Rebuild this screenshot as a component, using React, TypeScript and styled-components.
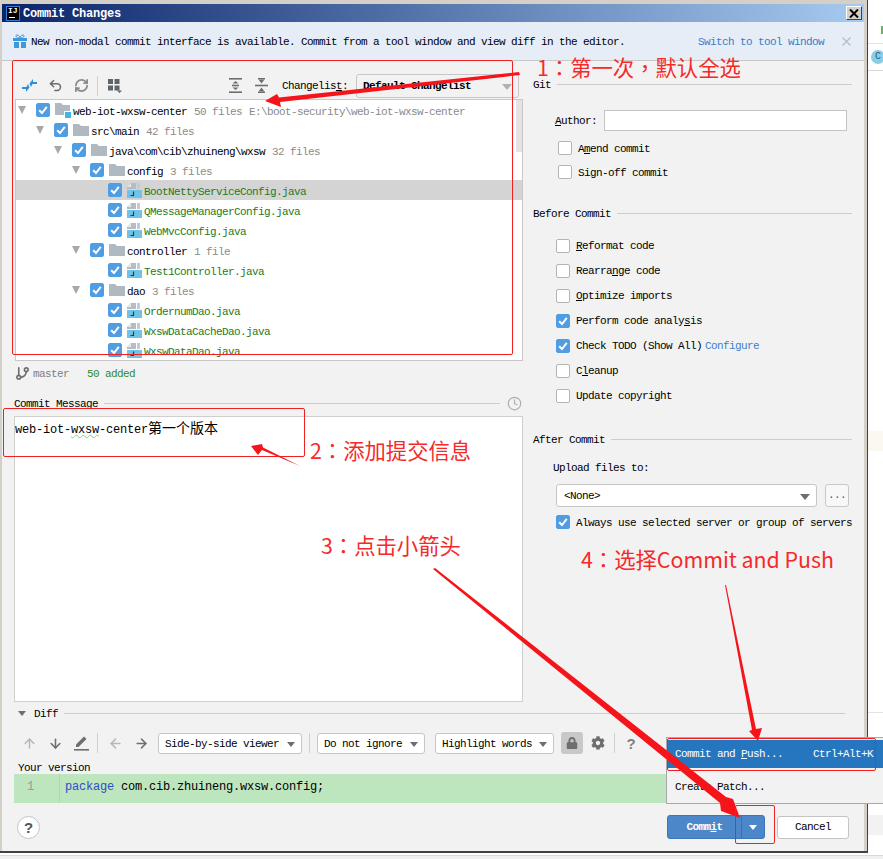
import React from "react";
import styled, { createGlobalStyle } from "styled-components";
import { ArrowUp, ArrowDown, ArrowLeft, ArrowRight, Clock, GitBranch, Undo2, RefreshCw } from "lucide-react";
import { FaCog, FaLock } from "react-icons/fa";

const Global = createGlobalStyle`
  html, body { margin: 0; padding: 0; background: #fff; }
  * { box-sizing: border-box; }
  u { text-underline-offset: 1px; }
`;

const Root = styled.div`
  position: relative; width: 883px; height: 859px; overflow: hidden; background: #fff;
  font-family: "Liberation Mono", "Noto Sans CJK SC", monospace;
  font-size: 11px; letter-spacing: -0.6px; color: #000; line-height: 13px;
`;
const BackLine = styled.div<{ $y: number; $c: string; $h?: number }>`
  position: absolute; left: 868px; right: 0; top: ${p => p.$y}px; height: ${p => p.$h ?? 1}px; background: ${p => p.$c};
`;
const BackBadge = styled.div`
  position: absolute; left: 871px; top: 50px; width: 14px; height: 14px; border-radius: 50%;
  background: #8acde6; color: #2f5f70; font-size: 10px; line-height: 14px; text-align: center; letter-spacing: 0;
`;
const BackTick = styled.div`
  position: absolute; left: 881px; top: 26px; width: 2px; height: 8px; background: #62b56b;
`;
const BottomStrip = styled.div`
  position: absolute; left: 0; right: 0; top: 853px; height: 6px; background: #f0f0f0; border-top: 1px solid #d8d8d8; margin-top: 2px;
`;
const Dialog = styled.div`
  position: relative; width: 868px; height: 853px; background: #f2f2f2; display: flex; flex-direction: column;
  border-style: solid; border-color: #d4d0c8; border-width: 4px 4px 2px 2px;
  &::after { content: ""; position: absolute; right: -4px; top: -4px; bottom: -2px; width: 1px; background: #404040; }
  &::before { content: ""; position: absolute; left: -2px; right: -4px; bottom: -2px; height: 2px; background: #404040; }
`;
const TitleBar = styled.div`
  height: 18px; flex: none; display: flex; align-items: center; padding: 0 2px 0 4px; gap: 3px;
  background: linear-gradient(90deg, #0a246a 0%, #a6caf0 100%);
`;
const AppLogo = styled.div`
  width: 14px; height: 15px; background: #000; border: 1px solid #3a7bd5; color: #fff; font-weight: bold;
  font-size: 8px; line-height: 8px; letter-spacing: 0; padding-left: 1px; position: relative;
  &::after { content: ""; position: absolute; left: 2px; bottom: 2px; width: 6px; height: 1px; background: #fff; }
`;
const TitleText = styled.div`
  flex: 1; color: #fff; font-weight: bold; font-size: 12px; letter-spacing: -0.2px; padding-top: 2px;
`;
const CloseBtn = styled.div`
  width: 16px; height: 14px; background: #d4d0c8; border: 1px solid; border-color: #fff #404040 #404040 #fff;
  display: flex; align-items: center; justify-content: center;
`;
const Banner = styled.div`
  height: 39px; flex: none; background: #e6edf7; border-bottom: 1px solid #c8c8c8; display: flex; align-items: center; padding: 0 13px 0 11px;
`;
const BannerText = styled.div` flex: 1; margin-left: 4px; padding-top: 2px; `;
const BannerLink = styled.div` color: #3a7cc8; margin-right: 18px; padding-top: 2px; `;
const Main = styled.div`
  flex: none; height: 645px; display: flex; padding: 11px 0 0 12px;
`;
const LeftCol = styled.div` width: 509px; flex: none; display: flex; flex-direction: column; `;
const RightCol = styled.div` width: 319px; margin-left: 10px; padding-top: 5px; display: flex; flex-direction: column; `;
const Toolbar = styled.div` height: 27px; flex: none; display: flex; align-items: center; padding-left: 2px; `;
const DiffBar = styled(Toolbar)` height: 24px; margin-top: 11px; `;
const IconSlot = styled.div`
  width: 26px; height: 22px; flex: none; display: flex; align-items: center; justify-content: center; position: relative;
`;
const GearSlot = styled(IconSlot)` margin-left: 2px; `;
const Sep = styled.div` width: 1px; height: 20px; background: #cfcfcf; margin: 0 4px 0 3px; flex: none; `;
const ComboSep = styled(Sep)` margin: 0 7px; `;
const Spacer = styled.div` flex: 1; `;
const ToolLabel = styled.div` margin: 0 8px 0 7px; padding-top: 2px; `;
const Combo = styled.div<{ $w: number; $flat?: boolean; $ml?: number }>`
  width: ${p => p.$w}px; height: 21px; flex: none; margin-left: ${p => p.$ml ?? 0}px;
  background: ${p => (p.$flat ? "#f2f2f2" : "#fff")}; border: 1px solid #c6c6c6; border-radius: 3px;
  display: flex; align-items: center; justify-content: space-between; padding: 2px 6px 0;
`;
const ComboRight = styled(Combo)` margin-right: 4px; height: 24px; font-weight: bold; `;
const Tri = styled.div<{ $c?: string; $s?: number }>`
  width: 0; height: 0; flex: none;
  border-left: ${p => p.$s ?? 4}px solid transparent; border-right: ${p => p.$s ?? 4}px solid transparent;
  border-top: ${p => (p.$s ?? 4) + 1}px solid ${p => p.$c ?? "#6e6e6e"};
`;
const Tree = styled.div`
  position: relative; height: 262px; flex: none; margin-left: 1px; background: #fff; border: 1px solid #c8c8c8; overflow: hidden;
`;
const Thumb = styled.div`
  position: absolute; right: 0; top: 0; width: 6px; height: 52px; background: #e4e4e4;
`;
const Row = styled.div<{ $depth: number; $sel?: boolean }>`
  height: 20px; display: flex; align-items: center; padding-left: ${p => 1 + p.$depth * 18}px; white-space: nowrap;
  background: ${p => (p.$sel ? "#d4d4d4" : "transparent")};
`;
const Twisty = styled.div` width: 19px; flex: none; padding-left: 1px; `;
const TwistTri = styled.div`
  width: 0; height: 0; border-left: 4.5px solid transparent; border-right: 4.5px solid transparent; border-top: 8px solid #a8a8a8;
`;
const CheckBox = styled.div<{ $on?: boolean }>`
  width: 14px; height: 14px; flex: none; border-radius: 2px; display: flex; align-items: center; justify-content: center;
  background: ${p => (p.$on ? "#4f9ee3" : "#fff")}; border: 1px solid ${p => (p.$on ? "#4f9ee3" : "#b4b4b4")};
`;
const NodeIcon = styled.svg<{ $file?: boolean }>`
  width: 16px; height: 16px; flex: none; margin: 0 2px 0 ${p => (p.$file ? 4 : 5)}px;
`;
const Name = styled.span<{ $file?: boolean }>`
  color: ${p => (p.$file ? "#1d7a1d" : "#000")}; padding-top: 4px;
`;
const Meta = styled.span` color: #8a8a8a; margin-left: 7px; padding-top: 4px; `;
const Status = styled.div` height: 24px; flex: none; display: flex; align-items: center; padding-left: 1px; `;
const Master = styled.span` color: #808080; margin-left: 3px; padding-top: 2px; `;
const Added = styled.span` color: #2f8a2f; margin-left: 18px; padding-top: 2px; `;
const MsgHead = styled.div` display: flex; align-items: center; height: 13px; margin-top: 12px; `;
const HeadText = styled.span` padding-top: 2px; `;
const HeadLine = styled.div` flex: 1; height: 1px; background: #cdcdcd; margin-left: 6px; `;
const ClockWrap = styled.div` width: 23px; padding-left: 5px; display: flex; justify-content: center; `;
const MsgBox = styled.div`
  height: 286px; margin-top: 6px; background: #fff; border: 1px solid #cfcfcf; padding: 2px 0 0 0;
  font-size: 12px; letter-spacing: -0.2px; line-height: 17px; white-space: nowrap;
`;
const Cjk = styled.span` font-family: "Noto Sans CJK SC", sans-serif; font-size: 14px; letter-spacing: 0; `;
const Wavy = styled.span` text-decoration: underline wavy #8fc98f 1px; `;
const Section = styled.div<{ $mt?: number }>`
  display: flex; align-items: center; height: 14px; flex: none; margin-top: ${p => p.$mt ?? 0}px;
`;
const AuthorRow = styled.div` display: flex; align-items: center; height: 21px; margin-top: 19px; padding-left: 22px; `;
const AuthorLabel = styled.div` width: 49px; flex: none; padding-top: 2px; `;
const Input = styled.div` width: 243px; height: 21px; background: #fff; border: 1px solid #c4c4c4; `;
const CheckRow = styled.div<{ $h: number; $indent: number; $mt?: number }>`
  height: ${p => p.$h}px; flex: none; display: flex; align-items: center; gap: 6px; padding-left: ${p => p.$indent}px; margin-top: ${p => p.$mt ?? 0}px; white-space: nowrap;
  & > span { padding-top: 2px; }
`;
const Link = styled.span` color: #3d7fd0; margin-left: 3px; `;
const Upload = styled.div` height: 14px; margin-top: 16px; padding-left: 20px; `;
const SelectRow = styled.div` display: flex; gap: 8px; margin-top: 8px; padding-left: 23px; `;
const MoreBtn = styled.div`
  width: 24px; height: 23px; background: #f8f8f8; border: 1px solid #c8c8c8; border-radius: 3px; text-align: center; line-height: 21px; color: #555;
`;
const SelectBox = styled(Combo)` height: 23px; padding: 2px 6px 0 7px; `;
const DiffWrap = styled.div` flex: 1; display: flex; flex-direction: column; padding-left: 12px; `;
const DiffHead = styled.div` display: flex; align-items: center; height: 14px; padding: 0 19px 0 4px; `;
const DiffName = styled.span` margin-left: 8px; padding-top: 2px; `;
const LockBtn = styled.div`
  width: 22px; height: 22px; flex: none; margin-left: 7px; background: #c8c8c8; border-radius: 3px; display: flex; align-items: center; justify-content: center;
`;
const SmallSep = styled(Sep)` margin: 0 3px; `;
const ToolHelp = styled.span`
  font-family: "Liberation Sans", sans-serif; font-weight: bold; font-size: 15px; letter-spacing: 0; color: #808080;
`;
const Version = styled.div` height: 14px; margin-top: 5px; padding: 2px 0 0 4px; `;
const GreenBar = styled.div`
  height: 29px; flex: none; margin-right: 15px; background: #bee6be; display: flex; overflow: hidden;
  font-size: 12px; letter-spacing: -0.2px;
`;
const Gutter = styled.div`
  width: 46px; flex: none; border-right: 1px solid #b0d8b0; color: #9a9a9a; padding: 6px 0 0 13px; line-height: 14px;
`;
const Code = styled.div` padding: 6px 0 0 5px; line-height: 14px; `;
const Kw = styled.span` color: #2a4fc4; `;
const Footer = styled.div` flex: 1; display: flex; align-items: center; padding: 0 15px 0 3px; `;
const Help = styled.div`
  width: 23px; height: 23px; border-radius: 50%; background: #fff; border: 1px solid #c4c4c4;
  font-family: "Liberation Sans", sans-serif; font-weight: bold; font-size: 15px; letter-spacing: 0; color: #555; text-align: center; line-height: 21px;
`;
const CommitBtn = styled.div`
  width: 98px; height: 24px; flex: none; background: #4c87c9; border: 1px solid #3c76b4; border-radius: 3px; display: flex; color: #fff;
`;
const CommitMain = styled.div` width: 74px; text-align: center; line-height: 22px; border-right: 1px solid #3a70ad; font-weight: bold; `;
const CommitArrow = styled.div` flex: 1; display: flex; align-items: center; justify-content: center; `;
const CancelBtn = styled.div`
  width: 72px; height: 23px; margin-left: 12px; background: #fff; border: 1px solid #c4c4c4; border-radius: 3px; text-align: center; line-height: 21px;
`;
const Popup = styled.div`
  position: absolute; left: 666px; top: 737px; width: 217px; height: 67px; background: #f2f2f2; border: 1px solid #a8a8a8; border-right: 0; padding-top: 2px;
`;
const PopActive = styled.div`
  height: 28px; background: #2675bf; color: #fff; display: flex; align-items: center; justify-content: space-between; padding: 0 10px 0 8px;
`;
const PopItem = styled.div` height: 36px; display: flex; align-items: center; padding: 2px 0 0 8px; `;
const Overlay = styled.svg`
  position: absolute; left: 0; top: 0; width: 883px; height: 859px; pointer-events: none;
`;
const RedBox = styled.div<{ $x: number; $y: number; $w: number; $h: number }>`
  position: absolute; left: ${p => p.$x}px; top: ${p => p.$y}px; width: ${p => p.$w}px; height: ${p => p.$h}px;
  border: 1px solid #f02020; border-radius: 2px; pointer-events: none;
`;
const RedText = styled.div<{ $x: number; $y: number }>`
  position: absolute; left: ${p => p.$x}px; top: ${p => p.$y}px; color: #f52a2a; white-space: nowrap;
  font-family: "Noto Sans CJK SC", sans-serif; font-size: 21.33px; line-height: 24px; letter-spacing: 0;
`;
const Punct = styled.span` font-family: "Noto Sans CJK TC", sans-serif; `;

const Tick = () => (
  <svg width="10" height="10" viewBox="0 0 10 10"><path d="M1.2 5.2 L4 8 L8.8 1.8" fill="none" stroke="#fff" strokeWidth="2" /></svg>
);
const Folder = () => (
  <NodeIcon viewBox="0 0 16 16"><path d="M0 2h6l2 2h8v10H0z" fill="#b0b9c1" /></NodeIcon>
);
const ModuleFolder = () => (
  <NodeIcon viewBox="0 0 16 16"><path d="M0 1h6l2 2h7v10H0z" fill="#b0b9c1" /><rect x="9" y="9" width="7" height="7" fill="#fff" /><rect x="10" y="10" width="6" height="6" fill="#40b6e0" /></NodeIcon>
);
const FileJ = () => (
  <NodeIcon $file viewBox="0 0 16 16">
    <path d="M5 1h5v6H1V5z" fill="#b4bcc4" />
    <path d="M5 1v4H1z" fill="#e8e8e8" />
    <path d="M11 1h3v6h-3z" fill="#c4cad0" />
    <rect x="1" y="8" width="15" height="8" fill="#6ec3e6" />
    <path d="M7.5 9.5v4h-3" fill="none" stroke="#23404f" strokeWidth="1.2" />
  </NodeIcon>
);
const Chk = ({ on }: { on?: boolean }) => <CheckBox $on={on}>{on && <Tick />}</CheckBox>;

type Node = { d: number; name: string; meta?: string; path?: string; kind: "mod" | "dir" | "file"; sel?: boolean };
const nodes: Node[] = [
  { d: 0, name: "web-iot-wxsw-center", meta: "50 files", path: "E:\\boot-security\\web-iot-wxsw-center", kind: "mod" },
  { d: 1, name: "src\\main", meta: "42 files", kind: "dir" },
  { d: 2, name: "java\\com\\cib\\zhuineng\\wxsw", meta: "32 files", kind: "dir" },
  { d: 3, name: "config", meta: "3 files", kind: "dir" },
  { d: 4, name: "BootNettyServiceConfig.java", kind: "file", sel: true },
  { d: 4, name: "QMessageManagerConfig.java", kind: "file" },
  { d: 4, name: "WebMvcConfig.java", kind: "file" },
  { d: 3, name: "controller", meta: "1 file", kind: "dir" },
  { d: 4, name: "Test1Controller.java", kind: "file" },
  { d: 3, name: "dao", meta: "3 files", kind: "dir" },
  { d: 4, name: "OrdernumDao.java", kind: "file" },
  { d: 4, name: "WxswDataCacheDao.java", kind: "file" },
  { d: 4, name: "WxswDataDao.java", kind: "file" },
];

export default function App() {
  return (
    <Root>
      <Global />
      <BackTick />
      <BackLine $y={43} $c="#e4e4e4" />
      <BackLine $y={70} $c="#d8d8d8" />
      <BackBadge>C</BackBadge>
      <BackLine $y={431} $c="#fbf9ef" $h={20} />
      <BackLine $y={712} $c="#e4e4e4" />
      <BackLine $y={815} $c="#f2f2f2" $h={20} />
      <BottomStrip />
      <Dialog>
        <TitleBar>
          <AppLogo>IJ</AppLogo>
          <TitleText>Commit Changes</TitleText>
          <CloseBtn>
            <svg width="10" height="9" viewBox="0 0 10 9"><path d="M1 0.5 L9 8.5 M9 0.5 L1 8.5" stroke="#000" strokeWidth="2" /></svg>
          </CloseBtn>
        </TitleBar>
        <Banner>
          <svg width="14" height="14" viewBox="0 0 14 14">
            <path d="M0 4h14v3H0zM1 8h5v6H1zM8 8h5v6H8z" fill="#3d9ad8" />
            <path d="M6 4C3 4 2 1 4 1s3 2 3 3c0-1 1-3 3-3s1 3-2 3" fill="none" stroke="#3d9ad8" />
          </svg>
          <BannerText>New non-modal commit interface is available. Commit from a tool window and view diff in the editor.</BannerText>
          <BannerLink>Switch to tool window</BannerLink>
          <svg width="9" height="9" viewBox="0 0 9 9"><path d="M0.5 0.5 L8.5 8.5 M8.5 0.5 L0.5 8.5" stroke="#b4bcc8" strokeWidth="1.2" /></svg>
        </Banner>
        <Main>
          <LeftCol>
            <Toolbar>
              <IconSlot>
                <svg width="15" height="15" viewBox="0 0 15 15" fill="#2f8fd8">
                  <path d="M7.5 5.5L11 1v3h4v2h-4.5L9 9z" />
                  <path d="M7.5 9.5L4 14v-3H0V9h4.5L6 6z" />
                </svg>
              </IconSlot>
              <IconSlot><Undo2 size={15} color="#6e6e6e" strokeWidth={2.4} /></IconSlot>
              <IconSlot><RefreshCw size={15} color="#8a8a8a" strokeWidth={2.8} /></IconSlot>
              <Sep />
              <IconSlot>
                <svg width="16" height="15" viewBox="0 0 16 15" fill="#5f6468">
                  <rect x="1" y="1" width="5" height="5" /><rect x="7.5" y="1" width="5" height="5" />
                  <rect x="1" y="7.5" width="5" height="5" /><rect x="7.5" y="7.5" width="5" height="5" />
                  <path d="M10 12.5h5l-2.5 2.5z" />
                </svg>
              </IconSlot>
              <Spacer />
              <IconSlot>
                <svg width="13" height="15" viewBox="0 0 13 15" fill="#6e6e6e">
                  <rect x="0" y="0" width="13" height="1.6" /><rect x="0" y="13.4" width="13" height="1.6" />
                  <rect x="3" y="6.7" width="7" height="1.6" /><path d="M6.5 3l3 2.5h-6zM6.5 12l-3-2.5h6z" />
                </svg>
              </IconSlot>
              <IconSlot>
                <svg width="13" height="15" viewBox="0 0 13 15" fill="#6e6e6e">
                  <rect x="0" y="6.7" width="13" height="1.6" /><path d="M6.5 5.5l-3-4h6zM6.5 9.5l3 4h-6z" />
                  <rect x="3" y="0" width="7" height="1.4" /><rect x="3" y="13.6" width="7" height="1.4" />
                </svg>
              </IconSlot>
              <ToolLabel>Changelis<u>t</u>:</ToolLabel>
              <ComboRight $w={163} $flat>
                Default Changelist
                <Tri $c="#b0b0b0" $s={5} />
              </ComboRight>
            </Toolbar>
            <Tree>
              {nodes.map(n => (
                <Row key={n.name} $depth={n.d} $sel={n.sel}>
                  <Twisty>{n.kind !== "file" && <TwistTri />}</Twisty>
                  <Chk on />
                  {n.kind === "mod" ? <ModuleFolder /> : n.kind === "dir" ? <Folder /> : <FileJ />}
                  <Name $file={n.kind === "file"}>{n.name}</Name>
                  {n.meta && <Meta>{n.meta}</Meta>}
                  {n.path && <Meta>{n.path}</Meta>}
                </Row>
              ))}
              <Thumb />
            </Tree>
            <Status>
              <GitBranch size={15} color="#6e6e6e" strokeWidth={2.6} />
              <Master>master</Master>
              <Added>50 added</Added>
            </Status>
            <MsgHead>
              <HeadText>Commit Message</HeadText>
              <HeadLine />
              <ClockWrap><Clock size={15} color="#b0b0b0" /></ClockWrap>
            </MsgHead>
            <MsgBox>
              web-iot-<Wavy>wxsw</Wavy>-center<Cjk>第一个版本</Cjk>
            </MsgBox>
          </LeftCol>
          <RightCol>
            <Section><HeadText>Git</HeadText><HeadLine /></Section>
            <AuthorRow>
              <AuthorLabel><u>A</u>uthor:</AuthorLabel>
              <Input />
            </AuthorRow>
            <CheckRow $h={24} $indent={25} $mt={5}><Chk /><span>A<u>m</u>end commit</span></CheckRow>
            <CheckRow $h={24} $indent={25}><Chk /><span>Si<u>g</u>n-off commit</span></CheckRow>
            <Section $mt={22}><HeadText>Before Commit</HeadText><HeadLine /></Section>
            <CheckRow $h={25} $indent={23} $mt={13}><Chk /><span><u>R</u>eformat code</span></CheckRow>
            <CheckRow $h={25} $indent={23}><Chk /><span>Rearra<u>n</u>ge code</span></CheckRow>
            <CheckRow $h={25} $indent={23}><Chk /><span><u>O</u>ptimize imports</span></CheckRow>
            <CheckRow $h={25} $indent={23}><Chk on /><span>Perform code analy<u>s</u>is</span></CheckRow>
            <CheckRow $h={25} $indent={23}><Chk on /><span>Check TODO (Show All)<Link>Configure</Link></span></CheckRow>
            <CheckRow $h={25} $indent={23}><Chk /><span>C<u>l</u>eanup</span></CheckRow>
            <CheckRow $h={25} $indent={23}><Chk /><span>Update copyright</span></CheckRow>
            <Section $mt={24}><HeadText>After Commit</HeadText><HeadLine /></Section>
            <Upload>Upload files to:</Upload>
            <SelectRow>
              <SelectBox $w={261}>&lt;None&gt;<Tri $s={5} /></SelectBox>
              <MoreBtn>...</MoreBtn>
            </SelectRow>
            <CheckRow $h={24} $indent={23} $mt={3}><Chk on /><span>Always use selected server or group of servers</span></CheckRow>
          </RightCol>
        </Main>
        <DiffWrap>
          <DiffHead>
            <Tri $c="#6e6e6e" $s={4} />
            <DiffName>Diff</DiffName>
            <HeadLine />
          </DiffHead>
          <DiffBar>
            <IconSlot><ArrowUp size={15} color="#b8b8b8" strokeWidth={2.4} /></IconSlot>
            <IconSlot><ArrowDown size={15} color="#6e6e6e" strokeWidth={2.4} /></IconSlot>
            <IconSlot>
              <svg width="15" height="15" viewBox="0 0 15 15" fill="#6e6e6e">
                <path d="M2 10.5 L10 2.5 L12.5 5 L4.5 13 H2z" transform="translate(0,-2)" />
                <rect x="0" y="13" width="15" height="1.6" />
              </svg>
            </IconSlot>
            <Sep />
            <IconSlot><ArrowLeft size={15} color="#b8b8b8" strokeWidth={2.4} /></IconSlot>
            <IconSlot><ArrowRight size={15} color="#6e6e6e" strokeWidth={2.4} /></IconSlot>
            <Combo $w={144} $ml={4}>Side-by-side viewer<Tri /></Combo>
            <ComboSep />
            <Combo $w={108}>Do not ignore<Tri /></Combo>
            <Combo $w={119} $ml={10}>Highlight words<Tri /></Combo>
            <LockBtn><FaLock size={12} color="#6e6e6e" /></LockBtn>
            <GearSlot><FaCog size={14} color="#6e6e6e" /></GearSlot>
            <SmallSep />
            <IconSlot><ToolHelp>?</ToolHelp></IconSlot>
          </DiffBar>
          <Version>Your version</Version>
          <GreenBar>
            <Gutter>1</Gutter>
            <Code><Kw>package</Kw> com.cib.zhuineng.wxsw.config;</Code>
          </GreenBar>
          <Footer>
            <Help>?</Help>
            <Spacer />
            <CommitBtn>
              <CommitMain>Comm<u>i</u>t</CommitMain>
              <CommitArrow><Tri $c="#fff" /></CommitArrow>
            </CommitBtn>
            <CancelBtn>Cancel</CancelBtn>
          </Footer>
        </DiffWrap>
      </Dialog>
      <Popup>
        <PopActive><span>Commit and <u>P</u>ush...</span><span>Ctrl+Alt+K</span></PopActive>
        <PopItem>Create Patch...</PopItem>
      </Popup>
      <Overlay viewBox="0 0 883 859">
        <g fill="#f5141a">
          <polygon points="519,72 520,75 280,102 281,107 265,101 277,94 279,97.5" />
          <polygon points="300,466 262,450 258,455 251,446 262,444 263,447.5" />
          <polygon points="433,569 435,568 726,797 733,799 740,818 721,811 720,803" />
          <polygon points="725,585 726,585 756,729 762,728 758,741 749,731 752,730" />
        </g>
      </Overlay>
      <RedBox $x={12} $y={60} $w={501} $h={295} />
      <RedBox $x={3} $y={408} $w={302} $h={49} />
      <RedBox $x={667} $y={738} $w={209} $h={33} />
      <RedBox $x={735} $y={805} $w={40} $h={39} />
      <RedText $x={537} $y={55}>1<Punct>：</Punct>第一次<Punct>，</Punct>默认全选</RedText>
      <RedText $x={310} $y={438}>2<Punct>：</Punct>添加提交信息</RedText>
      <RedText $x={321} $y={533}>3<Punct>：</Punct>点击小箭头</RedText>
      <RedText $x={581} $y={547}>4<Punct>：</Punct>选择Commit and Push</RedText>
    </Root>
  );
}
